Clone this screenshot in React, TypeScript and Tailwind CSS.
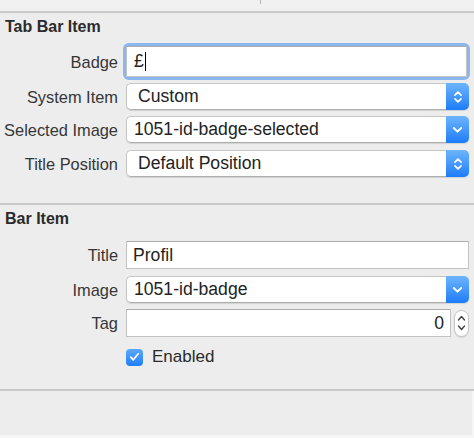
import React from 'react';

// Xcode-style attributes inspector: Tab Bar Item + Bar Item sections

const Label: React.FC<{ children: React.ReactNode }> = ({ children }) => (
  <div className="w-[118px] shrink-0 text-right text-[16.4px] leading-5 text-[#363636]">{children}</div>
);

const UpDown = () => (
  <svg width="10" height="14" viewBox="0 0 10 14" fill="none">
    <path d="M2 5.2 L5 2.2 L8 5.2" stroke="white" strokeWidth="1.7" strokeLinecap="round" strokeLinejoin="round" />
    <path d="M2 8.8 L5 11.8 L8 8.8" stroke="white" strokeWidth="1.7" strokeLinecap="round" strokeLinejoin="round" />
  </svg>
);

const Down = () => (
  <svg width="11" height="8" viewBox="0 0 11 8" fill="none">
    <path d="M1.8 2 L5.5 5.7 L9.2 2" stroke="white" strokeWidth="1.8" strokeLinecap="round" strokeLinejoin="round" />
  </svg>
);

const Popup: React.FC<{ value: string; pull?: boolean; pad?: string }> = ({ value, pull, pad = 'pl-[11px]' }) => (
  <div className="flex h-[27px] w-[343px] shadow-[0_1px_1px_rgba(0,0,0,0.12)] rounded-[5px]">
    <div
      className={`flex flex-1 items-center rounded-l-[5px] border-y border-l border-[#c6c6c6] border-b-[#adadad] bg-white ${pad} text-[17.6px] text-[#232323]`}
    >
      {value}
    </div>
    <div className="flex w-[23px] items-center justify-center rounded-r-[5px] bg-gradient-to-b from-[#6cb4fc] to-[#1a7cf8]">
      {pull ? <Down /> : <UpDown />}
    </div>
  </div>
);

const Field: React.FC<{ children?: React.ReactNode; className?: string }> = ({ children, className = '' }) => (
  <div
    className={`flex h-[28px] items-center border border-[#c2c2c2] border-t-[#acacac] bg-white px-[6px] text-[17.6px] text-[#1f1f1f] ${className}`}
  >
    {children}
  </div>
);

const Row: React.FC<{ label: string; className?: string; children: React.ReactNode }> = ({ label, className = '', children }) => (
  <div className={`flex items-center gap-2 ${className}`}>
    <Label>{label}</Label>
    {children}
  </div>
);

const Separator = () => <div className="h-[2px] bg-[#c9c9c9]" />;

export default function App() {
  return (
    <div className="flex h-[438px] w-[474px] flex-col bg-[#ededed] font-['Liberation_Sans',Arial,sans-serif]">
      {/* top strip */}
      <div className="h-[11px] bg-[#f1f1f1] pl-[260px]">
        <div className="h-[4px] w-px bg-[#b5b5b5]" />
      </div>
      <Separator />

      {/* Tab Bar Item */}
      <div className="flex h-[190px] flex-col pt-[4px]">
        <div className="pl-[5px] text-[16px] font-bold leading-5 text-[#2b2b2b]">Tab Bar Item</div>
        <Row label="Badge" className="mt-[9px]">
          <div className="rounded-[3px] shadow-[0_0_0_3px_#8ab7f0]">
            <Field className="h-[31px] w-[341px] border-[#9fc0ea] pl-[7px]">
              <span>£</span>
              <span className="ml-px h-[19px] w-px bg-black" />
            </Field>
          </div>
        </Row>
        <Row label="System Item" className="mt-[6px]">
          <Popup value="Custom" />
        </Row>
        <Row label="Selected Image" className="mt-[6px]">
          <Popup value="1051-id-badge-selected" pull pad="pl-[7px]" />
        </Row>
        <Row label="Title Position" className="mt-[7px]">
          <Popup value="Default Position" />
        </Row>
      </div>
      <Separator />

      {/* Bar Item */}
      <div className="flex h-[184px] flex-col pt-[4px]">
        <div className="pl-[5px] text-[16px] font-bold leading-5 text-[#2b2b2b]">Bar Item</div>
        <Row label="Title" className="mt-[12px]">
          <Field className="w-[343px]">Profil</Field>
        </Row>
        <Row label="Image" className="mt-[7px]">
          <Popup value="1051-id-badge" pull pad="pl-[7px]" />
        </Row>
        <Row label="Tag" className="mt-[6px]">
          <div className="flex items-center gap-[3px]">
            <Field className="w-[325px] justify-end">0</Field>
            <div className="flex h-[27px] w-[15px] flex-col items-center justify-center rounded-full border border-[#c4c4c4] bg-white shadow-[0_1px_1px_rgba(0,0,0,0.1)]">
              <svg width="9" height="18" viewBox="0 0 9 18" fill="none">
                <path d="M1.5 6 L4.5 2.5 L7.5 6" stroke="#444" strokeWidth="1.4" strokeLinecap="round" strokeLinejoin="round" />
                <path d="M1.5 12 L4.5 15.5 L7.5 12" stroke="#444" strokeWidth="1.4" strokeLinecap="round" strokeLinejoin="round" />
              </svg>
            </div>
          </div>
        </Row>
        <div className="mt-[10px] flex items-center gap-[9px] pl-[126px]">
          <div className="flex h-[17px] w-[17px] items-center justify-center rounded-[4px] bg-gradient-to-b from-[#5aa8fa] to-[#1d7ef8]">
            <svg width="11" height="10" viewBox="0 0 11 10" fill="none">
              <path d="M1.8 5.2 L4.3 7.8 L9.2 1.8" stroke="white" strokeWidth="1.8" strokeLinecap="round" strokeLinejoin="round" />
            </svg>
          </div>
          <span className="text-[17px] leading-5 text-[#2a2a2a]">Enabled</span>
        </div>
      </div>
      <Separator />

      {/* empty footer */}
      <div className="flex-1 border-b-[3px] border-r-2 border-[#f6f6f6]" />
    </div>
  );
}
